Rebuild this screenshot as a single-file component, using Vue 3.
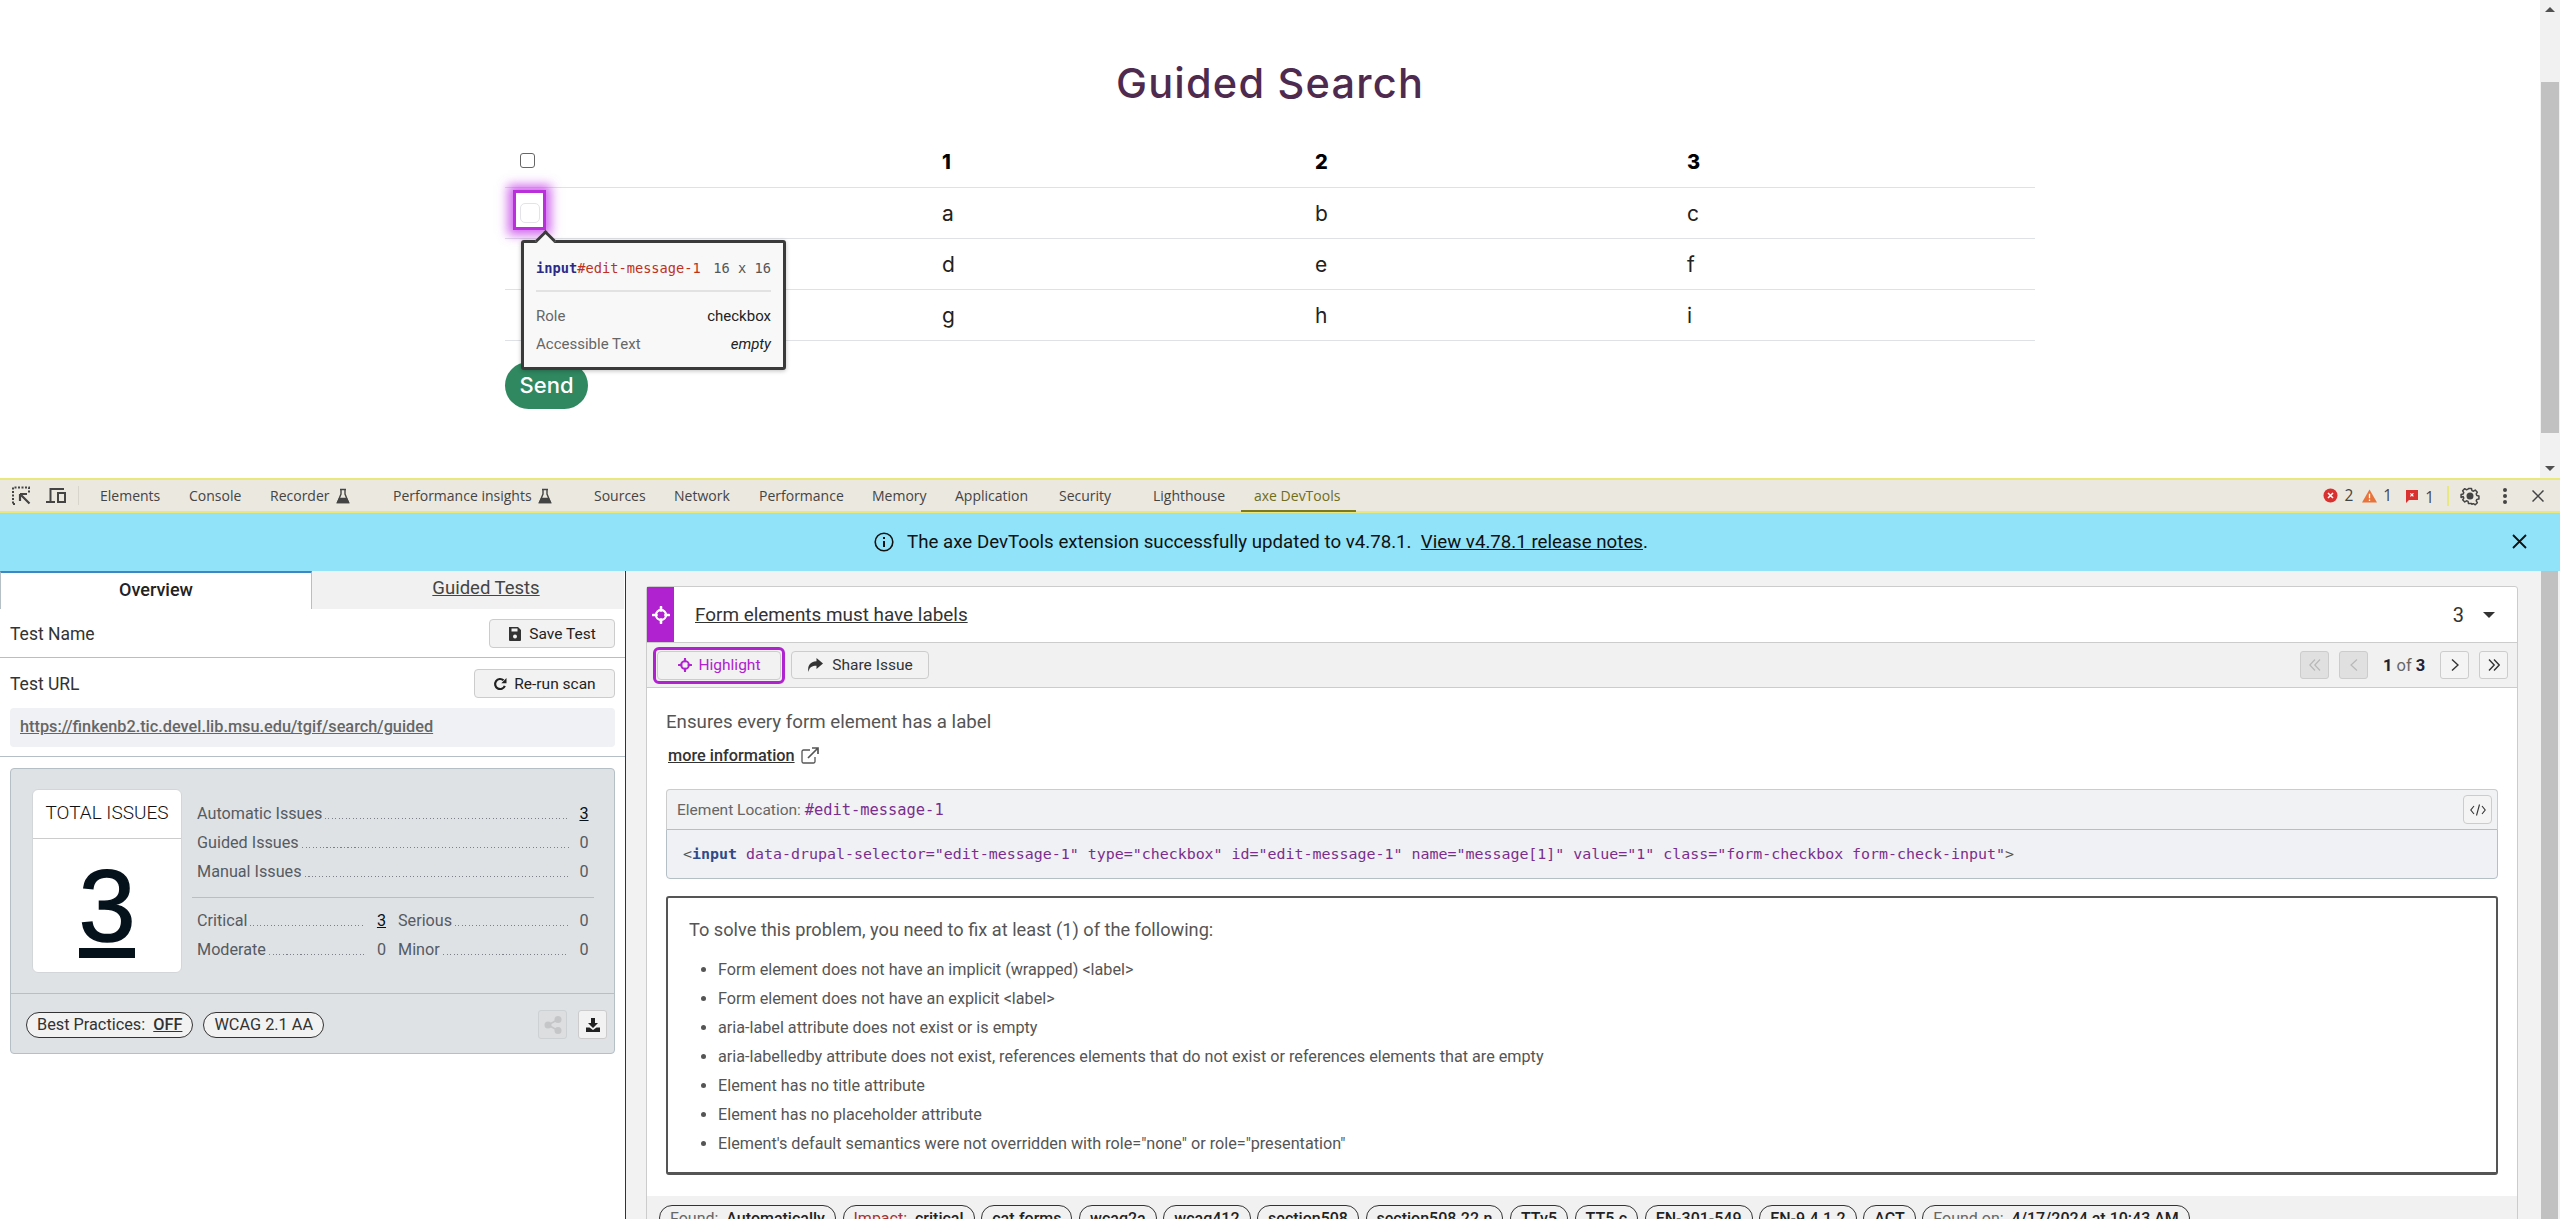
<script setup>
const tabs = [
  { t: 'Elements', w: 89 }, { t: 'Console', w: 81 }, { t: 'Recorder', w: 123, flask: true },
  { t: 'Performance insights', w: 201, flask: true }, { t: 'Sources', w: 80 }, { t: 'Network', w: 85 },
  { t: 'Performance', w: 113 }, { t: 'Memory', w: 83 }, { t: 'Application', w: 104 }, { t: 'Security', w: 94 },
  { t: 'Lighthouse', w: 101 }, { t: 'axe DevTools', w: 100, active: true }
]
const rows = [['a', 'b', 'c'], ['d', 'e', 'f'], ['g', 'h', 'i']]
const fixes = [
  'Form element does not have an implicit (wrapped) <label>',
  'Form element does not have an explicit <label>',
  'aria-label attribute does not exist or is empty',
  'aria-labelledby attribute does not exist, references elements that do not exist or references elements that are empty',
  'Element has no title attribute',
  'Element has no placeholder attribute',
  'Element\'s default semantics were not overridden with role="none" or role="presentation"'
]
const tags = ['cat.forms', 'wcag2a', 'wcag412', 'section508', 'section508.22.n', 'TTv5', 'TT5.c', 'EN-301-549', 'EN-9.4.1.2', 'ACT']
</script>

<template>
  <div class="root">
    <section class="page">
      <main class="content">
        <h1 class="title">Guided Search</h1>
        <div class="table">
          <div class="row head">
            <div class="c0"><span class="cb"></span></div>
            <div>1</div><div>2</div><div>3</div>
          </div>
          <div v-for="r in rows" :key="r[0]" class="row">
            <div class="c0"></div>
            <div v-for="v in r" :key="v">{{ v }}</div>
          </div>
        </div>
        <button class="send">Send</button>

        <div class="hl"><span class="hl-inner"></span></div>
        <div class="tip">
          <span class="tip-arrow"></span>
          <div class="tip-head">
            <span><b class="tn">input</b><span class="tid">#edit-message-1</span></span>
            <span class="dim">16 x 16</span>
          </div>
          <div class="tip-row"><span class="k">Role</span><span>checkbox</span></div>
          <div class="tip-row"><span class="k">Accessible Text</span><i>empty</i></div>
        </div>
      </main>
      <div class="sb">
        <span class="sb-up"></span>
        <div class="sb-thumb"></div>
        <span class="sb-down"></span>
      </div>
    </section>

    <nav class="bar">
      <div class="bar-tools">
        <svg width="22" height="22" viewBox="0 0 22 22" fill="none" stroke="#444">
          <path d="M3 18.500V2.500H19V9" stroke-width="2" stroke-dasharray="2 1.500" />
          <path d="M3 19h3" stroke-width="2" stroke-dasharray="2 1.500" />
          <path d="M10 9h7M10 9v7M10.500 9.500L19.500 18.500" stroke-width="2.200" />
        </svg>
        <svg width="22" height="22" viewBox="0 0 22 22" fill="none" stroke="#444" stroke-width="2">
          <path d="M19 4H5.500V17M1 17h9" />
          <rect x="13" y="8" width="7" height="9" />
        </svg>
      </div>
      <div v-for="t in tabs" :key="t.t" class="tab" :class="{ on: t.active }" :style="{ width: t.w + 'px' }">
        <span>{{ t.t }}</span>
        <svg v-if="t.flask" width="14" height="16" viewBox="0 0 14 16" fill="none" stroke="#444" stroke-width="1.400">
          <path d="M4 1.500h6M5 1.500V6L1.500 14.500h11L9 6V1.500" /><path d="M3.500 10.500h7l2 4h-11z" fill="#444" />
        </svg>
      </div>
      <div class="bar-right">
        <svg width="15" height="15" viewBox="0 0 15 15">
          <circle cx="7.500" cy="7.500" r="7" fill="#d93030" />
          <path d="M5 5l5 5M10 5l-5 5" stroke="#fff" stroke-width="1.500" />
        </svg>
        <span class="n">2</span>
        <svg width="15" height="14" viewBox="0 0 16 14"><path d="M8 0l8 14H0z" fill="#e8743b" /><path d="M8 4.500v5M8 10.800v1.600" stroke="#fff" stroke-width="1.400" /></svg>
        <span class="n n2">1</span>
        <svg width="14" height="14" viewBox="0 0 14 14"><path d="M1 1h12v10H4l-3 3z" fill="#d93030" /><path d="M5.400 4.400l3 3M8.400 4.400l-3 3" stroke="#fff" stroke-width="1.200" /></svg>
        <span class="n n3">1</span>
        <span class="vr"></span>
        <svg width="20" height="20" viewBox="0 0 24 24" fill="none" stroke="#444" stroke-width="2" stroke-linejoin="round">
          <circle cx="12" cy="12" r="3.200" fill="#444" />
          <path d="M10 2h4l.6 2.800 2 .8 2.400-1.500 2.800 2.800-1.500 2.400.8 2 2.800.6v4l-2.800.6-.8 2 1.500 2.400-2.800 2.800-2.400-1.500-2 .8L14 22h-4l-.6-2.800-2-.8L5 19.900l-2.800-2.800 1.500-2.400-.8-2L.1 14v-4l2.800-.6.8-2-1.500-2.400L5 2.200l2.400 1.500 2-.8z" transform="translate(1.200 1.200) scale(.9)" />
        </svg>
        <svg class="dots" width="6" height="18" viewBox="0 0 6 18" fill="#444"><circle cx="3" cy="3" r="2" /><circle cx="3" cy="9" r="2" /><circle cx="3" cy="15" r="2" /></svg>
        <svg class="x" width="12" height="12" viewBox="0 0 12 12" stroke="#444" stroke-width="1.500"><path d="M.5.500l11 11M11.500.5l-11 11" /></svg>
      </div>
    </nav>

    <div class="banner">
      <svg width="20" height="20" viewBox="0 0 20 20" fill="none" stroke="#111" stroke-width="1.600"><circle cx="10" cy="10" r="8.800" /><path d="M10 9v6M10 5v2" stroke-width="2" /></svg>
      <span>The axe DevTools extension successfully updated to v4.78.1.&nbsp; <u>View v4.78.1 release notes</u>.</span>
      <svg class="banner-x" width="15" height="15" viewBox="0 0 15 15" stroke="#111" stroke-width="1.800"><path d="M1 1l13 13M14 1L1 14" /></svg>
    </div>

    <div class="panels">
      <aside class="left">
        <div class="ltabs">
          <div class="ltab on">Overview</div>
          <div class="ltab second"><u>Guided Tests</u></div>
        </div>
        <div class="lrow r1">
          <span>Test Name</span>
          <button class="btn save">
            <svg width="14" height="16" viewBox="0 0 14 16"><path d="M1 1h9l3 3v10a1 1 0 0 1-1 1H2a1 1 0 0 1-1-1z" fill="#333" /><path d="M3.500 2.500h6v3h-6z" fill="#f2f2f2" /><circle cx="7" cy="10.500" r="2" fill="#f2f2f2" /></svg>
            Save Test
          </button>
        </div>
        <div class="url-sec">
          <div class="lrow r2">
            <span>Test URL</span>
            <button class="btn rerun">
              <svg width="14" height="14" viewBox="0 0 14 14" fill="none" stroke="#222" stroke-width="2.200"><path d="M11.800 8.800A5 5 0 1 1 10.500 3.300" /><path d="M13.500 1v5.200H8.300z" fill="#222" stroke="none" /></svg>
              Re-run scan
            </button>
          </div>
          <div class="url"><u>https://finkenb2.tic.devel.lib.msu.edu/tgif/search/guided</u></div>
        </div>
        <div class="summary">
          <div class="sum-top">
            <div class="total">
              <div class="total-h">TOTAL ISSUES</div>
              <div class="total-n"><span>3</span></div>
            </div>
            <div class="stats">
              <div class="stat"><span>Automatic Issues</span><i></i><b><u>3</u></b></div>
              <div class="stat"><span>Guided Issues</span><i></i><b>0</b></div>
              <div class="stat"><span>Manual Issues</span><i></i><b>0</b></div>
              <div class="hr"></div>
              <div class="duo">
                <div class="stat"><span>Critical</span><i></i><b><u>3</u></b></div>
                <div class="stat"><span>Serious</span><i></i><b>0</b></div>
                <div class="stat"><span>Moderate</span><i></i><b>0</b></div>
                <div class="stat"><span>Minor</span><i></i><b>0</b></div>
              </div>
            </div>
          </div>
          <div class="sum-foot">
            <span class="pill">Best Practices: &nbsp;<u class="off">OFF</u></span>
            <span class="pill">WCAG 2.1 AA</span>
            <span class="grow"></span>
            <button class="sq off-b">
              <svg width="18" height="18" viewBox="0 0 18 18" fill="#c4c6c8"><circle cx="4" cy="9" r="3.500" /><circle cx="14" cy="3.500" r="3.500" /><circle cx="14" cy="14.500" r="3.500" /><path d="M4 9l10-5.500M4 9l10 5.500" stroke="#c4c6c8" stroke-width="1.500" /></svg>
            </button>
            <button class="sq">
              <svg width="14" height="14" viewBox="0 0 14 14" fill="#222"><path d="M5 0h4v5h3L7 10 2 5h3z" /><path d="M0 9.500h3.500L7 12l3.500-2.500H14V14H0z" /></svg>
            </button>
          </div>
        </div>
      </aside>

      <section class="right">
        <div class="card">
          <header class="card-h">
            <div class="pin">
              <svg width="18" height="18" viewBox="0 0 18 18" fill="none" stroke="#fff" stroke-linecap="round"><circle cx="9" cy="9" r="5" stroke-width="2.300" /><path d="M9 1v3.500M9 13.500V17M1 9h3.500M13.500 9H17" stroke-width="2.600" /></svg>
            </div>
            <u class="rule">Form elements must have labels</u>
            <span class="grow"></span>
            <span class="count">3</span>
            <span class="caret"></span>
          </header>
          <div class="toolbar">
            <span class="focus">
              <button class="btn hlb">
                <svg width="14" height="14" viewBox="0 0 18 18" fill="none" stroke="#b021d0" stroke-linecap="round"><circle cx="9" cy="9" r="5" stroke-width="2.500" /><path d="M9 1v3.500M9 13.500V17M1 9h3.500M13.500 9H17" stroke-width="2.800" /></svg>
                Highlight
              </button>
            </span>
            <button class="btn share">
              <svg width="16" height="14" viewBox="0 0 16 14" fill="#333"><path d="M9.500 0L16 5.500 9.500 11V7.800C5 7.800 2.500 9 1.500 14 .2 8 3 3.500 9.500 3.200z" /></svg>
              Share Issue
            </button>
            <span class="grow"></span>
            <button class="pg dis">
              <svg width="12" height="12" viewBox="0 0 12 12" fill="none" stroke="#b8b8b8" stroke-width="1.200"><path d="M6 .5L.8 6 6 11.500M11 .5L5.800 6 11 11.500" /></svg>
            </button>
            <button class="pg dis">
              <svg width="8" height="12" viewBox="0 0 8 12" fill="none" stroke="#b8b8b8" stroke-width="1.200"><path d="M7 .5L1 6l6 5.500" /></svg>
            </button>
            <span class="pager"><b>1</b> of <b>3</b></span>
            <button class="pg">
              <svg width="8" height="12" viewBox="0 0 8 12" fill="none" stroke="#333" stroke-width="1.400"><path d="M1 .5L7 6l-6 5.500" /></svg>
            </button>
            <button class="pg">
              <svg width="12" height="12" viewBox="0 0 12 12" fill="none" stroke="#333" stroke-width="1.400"><path d="M6 .5L11.200 6 6 11.500M1 .5L6.200 6 1 11.500" /></svg>
            </button>
          </div>
          <div class="body">
            <p class="desc">Ensures every form element has a label</p>
            <p class="more">
              <u>more information</u>
              <svg width="19" height="17" viewBox="0 0 19 17" fill="none" stroke="#555" stroke-width="1.300"><path d="M9 3H2.500A1.500 1.500 0 0 0 1 4.500v10A1.500 1.500 0 0 0 2.500 16h10a1.500 1.500 0 0 0 1.500-1.500V10" /><path d="M7 11L17 1M11 1h6v6" stroke-width="1.700" /></svg>
            </p>
            <div class="loc">
              <div class="loc-h">
                <span>Element Location: <code class="purple loc-id">#edit-message-1</code></span>
                <button class="code-b">
                  <svg width="16" height="12" viewBox="0 0 16 12" fill="none" stroke="#333" stroke-width="1.100"><path d="M4 2L.8 6 4 10M12 2l3.200 4L12 10M9.500 .5l-3 11" /></svg>
                </button>
              </div>
              <div class="loc-c"><code><span class="ang">&lt;</span><b class="inp">input</b> <span class="purple">data-drupal-selector="edit-message-1" type="checkbox" id="edit-message-1" name="message[1]" value="1" class="form-checkbox form-check-input"</span><span class="ang">&gt;</span></code></div>
            </div>
            <div class="fix">
              <h3>To solve this problem, you need to fix at least (1) of the following:</h3>
              <ul>
                <li v-for="f in fixes" :key="f">{{ f }}</li>
              </ul>
            </div>
          </div>
          <footer class="tags">
            <span class="tag"><span class="tk">Found:</span>&nbsp; Automatically</span>
            <span class="tag"><span class="tk red">Impact:</span>&nbsp; critical</span>
            <span v-for="t in tags" :key="t" class="tag">{{ t }}</span>
            <span class="tag"><span class="tk">Found on:</span>&nbsp; 4/17/2024 at 10:43 AM</span>
          </footer>
        </div>
        <div class="rsb"></div>
      </section>
    </div>
  </div>
</template>

<style>
html, body { margin: 0; overflow: hidden; background: #fff; }
</style>

<style scoped>
* { box-sizing: border-box; }
.root { width: 2560px; height: 1219px; overflow: hidden; display: flex; flex-direction: column; font-family: Roboto, sans-serif; background: #fff; }
button { font-family: inherit; cursor: default; }
p, h1, h3, ul { margin: 0; padding: 0; }
.grow { flex: 1; }

.page { height: 478px; flex: none; display: flex; }
.content { position: relative; flex: 1; padding-left: 505px; }
.title { width: 1530px; height: 137px; padding-top: 56px; text-align: center; font: 500 41.5px/54px Inter, sans-serif; letter-spacing: 1.2px; color: #4f2a4f; }
.table { width: 1530px; font: 400 21px/1 Inter, sans-serif; color: #222; }
.row { display: grid; grid-template-columns: 437px 373px 372px 348px; align-items: center; height: 51px; border-bottom: 1px solid #dee2e6; }
.row.head { height: 51px; font-weight: 800; font-size: 20px; color: #000; }
.c0 { padding-left: 15px; display: flex; }
.cb { width: 15px; height: 15px; border: 1px solid #666; border-radius: 3px; background: #fff; margin-top: -4px; }
.send { position: relative; display: block; margin-top: 21px; width: 83px; height: 47px; border: 0; border-radius: 24px; background: #2f8860; color: #fff; font: 500 22px/47px Inter, sans-serif; padding: 0; }

.hl { position: absolute; left: 513px; top: 190px; width: 33px; height: 40px; border: 3px solid #b92fd9; background: #fff; box-shadow: 0 0 10px 5px rgba(190, 40, 230, .7); }
.hl-inner { position: absolute; left: 4px; top: 10px; width: 20px; height: 20px; border: 1px solid #e4e4e8; border-radius: 5px; }
.tip { position: absolute; left: 521px; top: 240px; width: 265px; height: 130px; padding: 16px 12px 0 12px; background: #f8f8f8; border: 3px solid #3a3a3a; border-radius: 3px; font-size: 15px; color: #222; box-shadow: 0 1px 4px rgba(0, 0, 0, .25); }
.tip-arrow { position: absolute; left: 14px; top: -10px; width: 15px; height: 15px; background: #f8f8f8; border-top: 3px solid #3a3a3a; border-left: 3px solid #3a3a3a; transform: rotate(45deg); }
.tip-head { position: relative; display: flex; justify-content: space-between; height: 33px; border-bottom: 2px solid #e2e2e2; font: 13.700px/18px "DejaVu Sans Mono", monospace; margin-bottom: 15px; white-space: nowrap; }
.tn { color: #2a2a8a; font-weight: 700; }
.tid { color: #c03020; }
.dim { color: #555; }
.tip-row { display: flex; justify-content: space-between; line-height: 18px; margin-bottom: 10px; }
.k { color: #666; }

.sb { width: 20px; flex: none; background: #f1f1f1; position: relative; }
.sb-thumb { position: absolute; left: 1px; right: 1px; top: 82px; bottom: 45px; background: #c1c1c1; }
.sb-up, .sb-down { position: absolute; left: 5px; border-left: 5px solid transparent; border-right: 5px solid transparent; }
.sb-up { top: 7px; border-bottom: 5px solid #505050; }
.sb-down { bottom: 7px; border-top: 5px solid #505050; }

.bar { height: 35px; flex: none; display: flex; align-items: center; background: #ebe8e0; border-top: 2px solid #e8e87e; border-bottom: 2px solid #e8e87e; font: 400 14px/1 "Open Sans", sans-serif; color: #444; }
.bar-tools { width: 100px; height: 31px; flex: none; display: flex; align-items: center; gap: 13px; padding-left: 10px; position: relative; }
.bar-tools::after { content: ""; position: absolute; left: 78px; top: 6px; bottom: 6px; width: 1px; background: #d8d6cc; }
.tab { flex: none; height: 31px; display: flex; align-items: center; gap: 6px; position: relative; white-space: nowrap; }
.tab.on { color: #6e6e1a; }
.tab.on::after { content: ""; position: absolute; left: -13px; width: 115px; bottom: -1px; height: 2px; background: #7a7a22; }
.bar-right { flex: 1; display: flex; align-items: center; justify-content: flex-end; padding-right: 16px; height: 31px; color: #444; font-size: 15.5px; }
.n { margin: 0 9px 0 6px; }
.n2 { margin-right: 13px; }
.n3 { margin: 4px 13px 0 6px; }
.vr { width: 2px; height: 20px; background: #e8e87e; margin-right: 11px; }
.dots { margin-left: 22px; }
.x { margin-left: 24px; }

.banner { height: 58px; flex: none; position: relative; background: #90e3f9; display: flex; align-items: center; justify-content: center; gap: 13px; padding-right: 38px; font-size: 18.700px; color: #111; }
.banner-x { position: absolute; left: 2512px; top: 21px; }

.panels { flex: 1; display: flex; min-height: 0; }
.left { width: 626px; flex: none; border-right: 1px solid #333; background: #fff; font-size: 17.500px; color: #333; }
.ltabs { display: flex; height: 38px; font-size: 18px; }
.ltab { width: 312px; background: #f1f1f1; text-align: center; line-height: 34px; color: #444; }
.ltab.second { padding-left: 36px; font-size: 18.500px; line-height: 35px; }
.ltab.on { background: #fff; border-top: 2px solid #3f86c4; border-left: 1px solid #b4bfc6; border-right: 1px solid #b4bfc6; font-weight: 500; color: #222; }
.lrow { display: flex; justify-content: space-between; align-items: center; padding: 0 10px; }
.r1 { height: 49px; padding-top: 1px; border-bottom: 1px solid #b4bfc6; }
.url-sec { height: 99px; border-bottom: 1px solid #b4bfc6; }
.r2 { height: 50px; padding-top: 1px; }
.btn { display: inline-flex; align-items: center; justify-content: center; gap: 7px; height: 29px; border: 1px solid #ccc; border-radius: 4px; background: #f2f2f2; color: #222; font-size: 15.500px; font-weight: 400; padding: 0; }
.save { width: 126px; }
.rerun { width: 141px; }
.url { margin: 0 10px; height: 39px; background: #f0f1f4; border-radius: 4px; padding-left: 10px; font-size: 16.300px; font-weight: 500; line-height: 37px; color: #666; }
.summary { margin: 11px 0 0 10px; width: 605px; height: 286px; background: #dfe2e5; border: 1px solid #b4bfc6; border-radius: 4px; }
.sum-top { height: 225px; display: flex; padding: 20px 0 0 21px; border-bottom: 1px solid #b4bfc6; }
.total { width: 150px; height: 184px; background: #fff; border: 1px solid #d3d6d9; border-radius: 6px; flex: none; }
.total-h { height: 49px; border-bottom: 1px solid #ccc; text-align: center; font-size: 19px; font-weight: 300; line-height: 46px; color: #111; }
.total-n { text-align: center; padding-top: 16px; font: 400 102px/1 "Liberation Sans", sans-serif; color: #05121c; -webkit-text-stroke: 1.5px #05121c; }
.total-n span { display: inline-block; height: 101px; line-height: 98px; border-bottom: 10px solid #05121c; }
.stats { width: 402px; margin-left: 10px; padding-top: 11px; font-size: 16.200px; color: #555b63; }
.stat { display: flex; align-items: baseline; height: 29px; line-height: 28px; padding: 0 0 0 5px; }
.stat i { flex: 1; margin: 0 5px 0 3px; height: 1px; background: repeating-linear-gradient(90deg, #7c8188 0 1px, transparent 1px 3.500px); }
.stat b { font-weight: 400; width: 20px; text-align: center; flex: none; }
.stat u { color: #05121c; }
.hr { height: 1px; background: #b4bfc6; margin: 10px 0 9px; }
.duo { display: grid; grid-template-columns: 206px 196px; }
.duo .stat:nth-child(even) { padding-left: 0; }
.duo .stat:nth-child(odd) b { margin-right: 5px; width: 23px; }
.sum-foot { height: 60px; display: flex; align-items: center; padding: 1px 7px 0 15px; gap: 10px; }
.pill { height: 26px; line-height: 24px; padding: 0 10px; border: 1px solid #333; border-radius: 13px; background: #f2f2f2; font-size: 16.300px; color: #333; }
.off { font-weight: 500; }
.sq { width: 29px; height: 29px; border: 1px solid #ccc; border-radius: 3px; background: #f2f2f2; padding: 0; display: flex; align-items: center; justify-content: center; margin-left: 1px; }
.off-b { background: #dcdedf; border-color: #ced1d3; }

.right { flex: 1; min-width: 0; background: #f2f2f2; position: relative; padding: 15px 0 0 20px; }
.rsb { position: absolute; right: 2px; top: 0; bottom: 0; width: 17px; background: #c1c1c1; }
.card { width: 1872px; height: 640px; background: #fff; border: 1px solid #ccc; border-radius: 3px; }
.card-h { height: 56px; display: flex; align-items: center; border-bottom: 1px solid #ccc; }
.pin { width: 27px; height: 55px; background: #b021d0; display: flex; align-items: center; justify-content: center; }
.rule { margin-left: 21px; font-size: 18.900px; color: #333; }
.count { font-size: 20px; color: #333; margin-right: 19px; }
.caret { margin-right: 22px; border-left: 6px solid transparent; border-right: 6px solid transparent; border-top: 6px solid #333; }
.toolbar { height: 45px; display: flex; align-items: center; padding: 0 9px 0 6px; background: #f1f1f1; border-bottom: 1px solid #ccc; }
.focus { width: 132px; height: 37px; padding: 1px; border: 3px solid #b021d0; border-radius: 6px; display: flex; }
.hlb { width: 100%; height: 100%; color: #b021d0; }
.share { width: 138px; height: 28px; margin-left: 6px; gap: 9px; color: #333; }
.pg { width: 29px; height: 28px; border: 1px solid #ccc; border-radius: 3px; background: #f4f4f4; display: flex; align-items: center; justify-content: center; padding: 0; margin-left: 10px; }
.pg.dis { background: #e0e0e0; }
.pager { width: 57px; margin-left: 15px; font-size: 16.500px; color: #666; white-space: nowrap; }
.pager b { color: #223; font-weight: 700; }
.pager + .pg { margin-left: 0; }
.body { height: 508px; padding: 0 19px; overflow: hidden; }
.desc { padding-top: 23px; font-size: 18.700px; line-height: 22px; color: #555; }
.more { margin-top: 11px; padding-left: 2px; height: 22px; display: flex; align-items: center; gap: 6px; font-size: 16.300px; font-weight: 500; color: #333; }
.loc { margin-top: 23px; }
.loc-h { height: 40px; display: flex; justify-content: space-between; align-items: center; padding: 0 5px 0 10px; background: #f1f2f4; border: 1px solid #ccc; border-bottom: 0; border-radius: 4px 4px 0 0; font-size: 15.500px; color: #666; }
.code-b { width: 29px; height: 29px; border: 1px solid #ccc; border-radius: 4px; background: #f4f4f4; padding: 0; display: flex; align-items: center; justify-content: center; }
code { font: 14.950px/1 "DejaVu Sans Mono", monospace; }
.loc-id { font-size: 15.400px; }
.purple { color: #7b2d8e; }
.loc-c { height: 50px; display: flex; align-items: center; padding-left: 16px; background: #f0f1f4; border: 1px solid #b4bfc6; border-radius: 0 0 4px 4px; white-space: pre; }
.ang { color: #555; }
.inp { color: #2e4a8a; }
.fix { margin-top: 17px; height: 279px; padding: 0 21px; border: 2px solid #555; border-bottom-width: 3px; border-radius: 3px; color: #555; }
.fix h3 { padding-top: 21px; font-size: 18.200px; font-weight: 400; line-height: 22px; }
.fix ul { margin-top: 13.500px; padding-left: 29px; font-size: 16.200px; }
.fix li { height: 29px; line-height: 29px; }
.tags { height: 40px; display: flex; gap: 6.600px; padding: 9px 0 0 12px; background: #f1f1f1; overflow: hidden; }
.tag { flex: none; height: 26px; padding: 0 10px; border: 1px solid #333; border-radius: 13px; font-size: 16px; line-height: 26px; font-weight: 500; color: #222; white-space: nowrap; }
.tk { font-weight: 400; color: #666; }
.red { color: #a83232; }
</style>
